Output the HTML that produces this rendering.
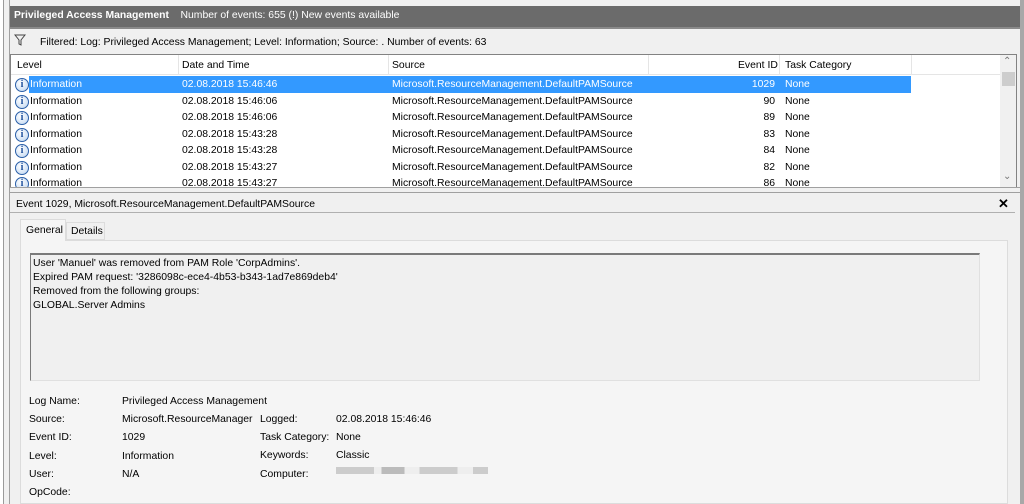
<!DOCTYPE html><html><head><style>
*{margin:0;padding:0;box-sizing:border-box}
body{width:1024px;height:504px;background:#f0f0f0;font-family:"Liberation Sans",sans-serif;font-size:10.4px;color:#000;position:relative;overflow:hidden}
.a{position:absolute;white-space:nowrap}
.row{position:absolute;left:12px;width:900px;height:16px;line-height:16px}
.row span{position:absolute}
.ic{position:absolute;left:3px;top:1px;width:14px;height:14px;border-radius:50%;border:1px solid #2b5fa8;background:radial-gradient(circle at 40% 35%,#fff,#bcd4f0);font:bold 10px "Liberation Serif",serif;color:#1d4f9c;text-align:center;line-height:12px}
</style></head><body>
<div class="a" style="left:0;top:0;width:4px;height:504px;background:#fff"></div>
<div class="a" style="left:3px;top:0;width:1px;height:504px;background:#9a9a9a"></div>
<div class="a" style="left:9px;top:0;width:1px;height:504px;background:#a0a0a0"></div>
<div class="a" style="left:1020px;top:0;width:4px;height:504px;background:#a8a8a8"></div>
<div class="a" style="left:10px;top:6px;width:1010px;height:21px;background:#6b6b6b;color:#fff;line-height:20px;padding-left:4px"><b>Privileged Access Management</b>&nbsp;&nbsp;&nbsp;&nbsp;Number of events: 655 (!) New events available</div>
<div class="a" style="left:10px;top:27px;width:1010px;height:2px;background:#8a8a8a"></div>
<svg class="a" style="left:14px;top:34px" width="12" height="12"><path d="M1 1H11L7 6V11L5 10V6Z" fill="none" stroke="#444" stroke-width="1"/></svg>
<div class="a" style="left:40px;top:37px">Filtered: Log: Privileged Access Management; Level: Information; Source: . Number of events: 63</div>
<div class="a" style="left:10px;top:54px;width:1007px;height:134px;background:#fff;border:1px solid #828282;overflow:hidden">
<div class="a" style="left:0;top:0;width:990px;height:20px;border-bottom:1px solid #e5e5e5"></div>
<div class="a" style="left:167px;top:0;width:1px;height:20px;background:#e5e5e5"></div>
<div class="a" style="left:377px;top:0;width:1px;height:20px;background:#e5e5e5"></div>
<div class="a" style="left:637px;top:0;width:1px;height:20px;background:#e5e5e5"></div>
<div class="a" style="left:768px;top:0;width:1px;height:20px;background:#e5e5e5"></div>
<div class="a" style="left:900px;top:0;width:1px;height:20px;background:#e5e5e5"></div>
<div class="a" style="left:6px;top:5px">Level</div><div class="a" style="left:171px;top:5px">Date and Time</div><div class="a" style="left:381px;top:5px">Source</div><div class="a" style="left:727px;top:5px">Event ID</div><div class="a" style="left:774px;top:5px">Task Category</div>
<div class="a" style="left:989px;top:0;width:17px;height:132px;background:#f0f0f0"></div>
<div class="a" style="left:992px;top:1px;color:#777;font-size:10px">&#8963;</div>
<div class="a" style="left:991px;top:17px;width:13px;height:14px;background:#cdcdcd"></div>
<div class="a" style="left:992px;top:116px;color:#777;font-size:10px">&#8964;</div>
</div>
<div class="a" style="left:29px;top:76px;width:882px;height:17px;background:#3399ff"></div>
<div id="rows"></div>
<script>
var d=[["02.08.2018 15:46:46",1029],["02.08.2018 15:46:06",90],["02.08.2018 15:46:06",89],["02.08.2018 15:43:28",83],["02.08.2018 15:43:28",84],["02.08.2018 15:43:27",82],["02.08.2018 15:43:27",86]],h="";
d.forEach(function(r,i){var c=i==0?"#fff":"#000";h+='<div class="row" style="top:'+(77+i*16.5)+'px;color:'+c+'"><div class="ic">i</div><span style="left:18px">Information</span><span style="left:170px">'+r[0]+'</span><span style="left:380px">Microsoft.ResourceManagement.DefaultPAMSource</span><span style="right:137px">'+r[1]+'</span><span style="left:773px">None</span></div>'});
document.getElementById("rows").innerHTML=h;
</script>
<div class="a" style="left:10px;top:187px;width:1010px;height:6px;background:#f0f0f0;border-bottom:1px solid #a0a0a0"></div>
<div class="a" style="left:10px;top:187px;width:1010px;height:1px;background:#a0a0a0"></div>
<div class="a" style="left:16px;top:199px">Event 1029, Microsoft.ResourceManagement.DefaultPAMSource</div>
<div class="a" style="left:998px;top:196px;font-weight:bold;font-size:13px">&#10005;</div>
<div class="a" style="left:10px;top:212px;width:1005px;height:1px;background:#b0b0b0"></div>
<div class="a" style="left:20px;top:240px;width:988px;height:264px;background:#f5f5f5;border:1px solid #dcdcdc"></div>
<div class="a" style="left:20px;top:219px;width:46px;height:22px;background:#f5f5f5;border:1px solid #dcdcdc;border-bottom:none;padding:5px 0 0 5px">General</div>
<div class="a" style="left:66px;top:222px;width:39px;height:18px;background:#f0f0f0;border:1px solid #dcdcdc;padding:3px 0 0 4px">Details</div>
<div class="a" style="left:30px;top:253px;width:950px;height:128px;background:#f0f0f0;border-top:2px solid #7a7a7a;border-left:1px solid #7a7a7a;border-right:1px solid #e0e0e0;border-bottom:1px solid #e0e0e0"></div>
<div class="a" style="left:33px;top:257px;line-height:14px">User 'Manuel' was removed from PAM Role 'CorpAdmins'.<br>Expired PAM request: '3286098c-ece4-4b53-b343-1ad7e869deb4'<br>Removed from the following groups:<br>GLOBAL.Server Admins</div>
<div class="a" style="left:29px;top:393px;line-height:18.2px">Log Name:<br>Source:<br>Event ID:<br>Level:<br>User:<br>OpCode:</div>
<div class="a" style="left:122px;top:393px;line-height:18.2px">Privileged Access Management<br>Microsoft.ResourceManager<br>1029<br>Information<br>N/A</div>
<div class="a" style="left:260px;top:411px;line-height:18.2px">Logged:<br>Task Category:<br>Keywords:<br>Computer:</div>
<div class="a" style="left:336px;top:411px;line-height:18.2px">02.08.2018 15:46:46<br>None<br>Classic</div>
<div class="a" style="left:336px;top:467px;width:152px;height:7px;background:linear-gradient(90deg,#ccc 0 25%,#eee 25% 30%,#bbb 30% 45%,#eee 45% 55%,#ccc 55% 80%,#eee 80% 90%,#ccc 90%)"></div>
</body></html>
